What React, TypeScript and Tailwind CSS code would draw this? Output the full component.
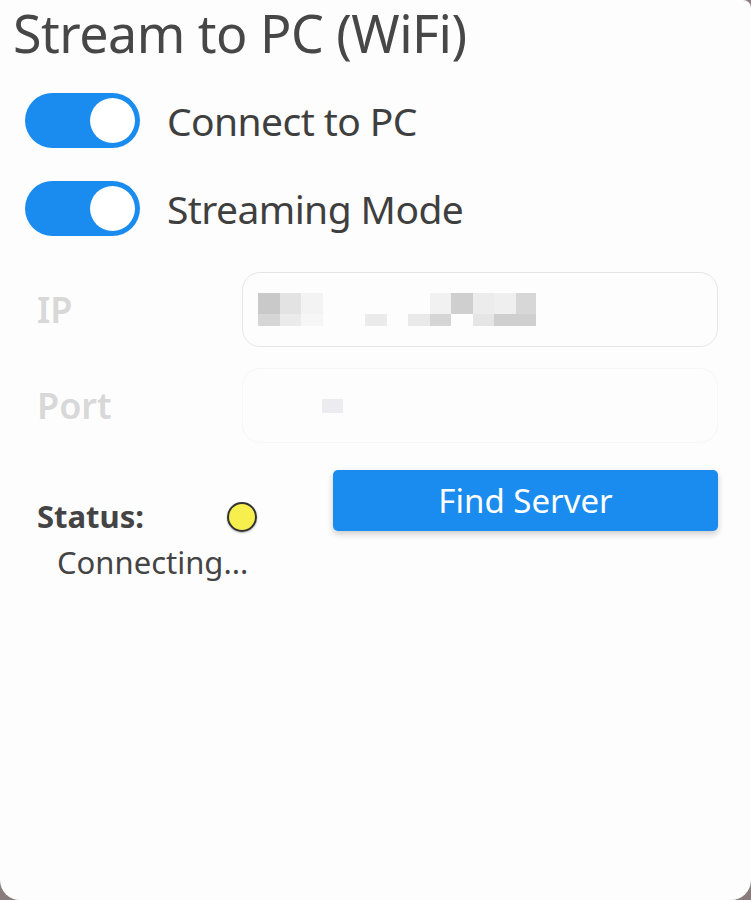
import React from "react";

const ipBlocksTop: [number, string][] = [
  [22, "#c9c9c9"],
  [21, "#e3e3e3"],
  [22, "#f3f3f3"],
  [107, "transparent"],
  [21, "#f1f1f1"],
  [22, "#cfcfcf"],
  [21, "#ececec"],
  [22, "#efefef"],
  [20, "#d7d7d7"],
];

const ipBlocksBottom: [number, string][] = [
  [22, "#d6d6d6"],
  [21, "#ebebeb"],
  [22, "#f6f6f6"],
  [42, "transparent"],
  [22, "#ebebeb"],
  [21, "transparent"],
  [22, "#e9e9e9"],
  [21, "#d5d5d5"],
  [22, "transparent"],
  [21, "#e5e5e5"],
  [42, "#cfcfcf"],
];

const Toggle = () => (
  <div className="flex h-[55px] w-[115px] shrink-0 items-center justify-end rounded-full bg-[#1a8cf0] pr-[5px]">
    <div className="h-[45px] w-[45px] rounded-full bg-white" />
  </div>
);

const BlockRow = ({ blocks, h }: { blocks: [number, string][]; h: number }) => (
  <div className="flex">
    {blocks.map(([w, c], i) => (
      <div key={i} style={{ width: w, height: h, backgroundColor: c }} />
    ))}
  </div>
);

export default function App() {
  return (
    <div className="h-[900px] w-[751px] bg-[#8a7c7c] font-['Noto_Sans',sans-serif]">
      <div className="flex h-full flex-col rounded-b-[20px] rounded-tr-[8px] bg-[#fdfdfd]">
        {/* Title */}
        <h1 className="mt-[4px] pl-[13px] text-[52px] leading-[1.1] tracking-[-0.01em] font-normal text-[#474747]">
          Stream to PC (WiFi)
        </h1>

        {/* Toggles */}
        <div className="mt-[32px] flex flex-col gap-[33px] pl-[25px]">
          <div className="flex items-center gap-[27px]">
            <Toggle />
            <span className="text-[39px] leading-none tracking-[-0.015em] text-[#3f3f3f]">Connect to PC</span>
          </div>
          <div className="flex items-center gap-[27px]">
            <Toggle />
            <span className="text-[39px] leading-none tracking-[-0.015em] text-[#3f3f3f]">Streaming Mode</span>
          </div>
        </div>

        {/* IP / Port */}
        <div className="mt-[36px] flex flex-col gap-[21px] pl-[37px] pr-[33px]">
          <div className="flex items-center">
            <span className="w-[205px] text-[36px] leading-none font-semibold text-[#d8d8d8]">IP</span>
            <div className="flex h-[75px] flex-1 items-center rounded-[18px] border border-[#e6e6e6] bg-[#fdfdfd] pl-[15px]">
              <div className="flex flex-col">
                <BlockRow blocks={ipBlocksTop} h={21} />
                <BlockRow blocks={ipBlocksBottom} h={12} />
              </div>
            </div>
          </div>
          <div className="flex items-center">
            <span className="w-[205px] text-[36px] leading-none font-semibold text-[#d8d8d8]">Port</span>
            <div className="flex h-[75px] flex-1 items-center rounded-[18px] border border-[#f6f6f6] bg-[#fdfdfd] pl-[79px]">
              <div className="h-[14px] w-[21px] bg-[#ececf0]" />
            </div>
          </div>
        </div>

        {/* Status + Find Server */}
        <div className="mt-[27px] flex items-start pl-[37px] pr-[33px]">
          <div className="flex flex-1 flex-col">
            <div className="mt-[31px] flex items-center">
              <span className="w-[190px] text-[31px] leading-none font-bold text-[#444444]">Status:</span>
              <div className="h-[30px] w-[30px] rounded-full border-2 border-[#333333] bg-[#f7ef4d] shadow-[0_1px_2px_rgba(0,0,0,0.3)]" />
            </div>
            <span className="mt-[15px] pl-[20px] text-[31px] leading-none text-[#444444]">Connecting...</span>
          </div>
          <button className="flex h-[61px] w-[385px] items-center justify-center rounded-[5px] bg-[#1a8cf0] text-[33px] leading-none text-white shadow-[0_3px_6px_rgba(0,0,0,0.2)]">
            Find Server
          </button>
        </div>
      </div>
    </div>
  );
}
